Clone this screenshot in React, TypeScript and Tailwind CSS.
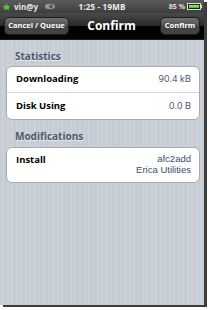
import React from "react";

const font = { fontFamily: '"Open Sans", "DejaVu Sans", sans-serif' };

export default function App() {
  return (
    <div className="w-[210px] h-[310px] bg-white relative overflow-hidden" style={font}>
      <div className="w-[204px] h-[305px] flex flex-col shadow-[3px_2px_0_#3c3c3c] bg-[repeating-linear-gradient(90deg,#c5ccd4_0px,#c5ccd4_2.5px,#ccd2d9_2.5px,#ccd2d9_4.5px)]">
        {/* Status bar */}
        <div className="h-[13px] flex items-center px-[2px] bg-[linear-gradient(#5b5b5b,#3d3d3d)] text-white text-[8px] font-bold leading-none">
          <div className="flex items-center w-[70px] gap-[3px]">
            <svg width="9" height="8" viewBox="0 0 9 8">
              <path d="M4.5 0.5 L6 3 L8.5 3 L6.5 5 L7 7.5 L4.5 6 L2 7.5 L2.5 5 L0.5 3 L3 3 Z" fill="#5fbf3a" />
            </svg>
            <span className="text-[#e6e6e6]">vin@y</span>
            <svg width="12" height="7" viewBox="0 0 12 7" className="ml-[3px]">
              <ellipse cx="6" cy="3.5" rx="5" ry="2.8" fill="#9a9a9a" />
              <circle cx="7" cy="3.5" r="2" fill="#5a5a5a" />
            </svg>
          </div>
          <div className="flex-1 text-center text-[#eeeeee] tracking-[0.2px]">1:25 - 19MB</div>
          <div className="w-[70px] flex items-center justify-end gap-[2px]">
            <span className="text-[7px] text-[#e0e0e0]">85 %</span>
            <div className="flex items-center">
              <div className="w-[14px] h-[7px] border border-[#dddddd] p-[1px] bg-[#222]">
                <div className="w-full h-full bg-[linear-gradient(#9cf07a,#3cc21a)]" />
              </div>
              <div className="w-[1px] h-[3px] bg-[#dddddd]" />
            </div>
          </div>
        </div>
        {/* Nav bar */}
        <div className="h-[27px] flex items-center justify-between px-[4px] bg-[linear-gradient(#4a4a4a_0%,#2a2a2a_48%,#000_52%,#050505_100%)] border-b border-[#1a1a1a]">
          <div className="h-[18px] w-[65px] rounded-[5px] border border-[#1e1e1e] bg-[linear-gradient(#707070_0%,#505050_50%,#404040_52%,#444444_100%)] flex items-center justify-center text-white text-[7.5px] font-bold">
            Cancel / Queue
          </div>
          <div className="text-white text-[12px] font-bold -ml-[6px]">Confirm</div>
          <div className="h-[18px] w-[40px] rounded-[5px] border border-[#1e1e1e] bg-[linear-gradient(#707070_0%,#505050_50%,#404040_52%,#444444_100%)] flex items-center justify-center text-white text-[7.5px] font-bold">
            Confirm
          </div>
        </div>
        {/* Content */}
        <div className="flex flex-col px-[6px] pr-[4px]">
          <div className="h-[26px] pt-[9px] pl-[9px] text-[10px] font-bold text-[#4c566c] [text-shadow:0_1px_0_#ffffffaa] leading-[14px]">
            Statistics
          </div>
          <div className="bg-white border border-[#a8abae] rounded-[6px] flex flex-col">
            <div className="h-[26px] flex items-center justify-between pl-[9px] pr-[8px] border-b border-[#d4d4d4]">
              <span className="text-[9.5px] font-bold text-black">Downloading</span>
              <span className="text-[9.5px] text-[#3e4c6e]">90.4 kB</span>
            </div>
            <div className="h-[26px] flex items-center justify-between pl-[9px] pr-[8px]">
              <span className="text-[9.5px] font-bold text-black">Disk Using</span>
              <span className="text-[9.5px] text-[#3e4c6e]">0.0 B</span>
            </div>
          </div>
          <div className="h-[27px] pt-[9px] pl-[9px] text-[10px] font-bold text-[#4c566c] [text-shadow:0_1px_0_#ffffffaa] leading-[14px]">
            Modifications
          </div>
          <div className="bg-white border border-[#a8abae] rounded-[6px] h-[36px] flex justify-between pl-[9px] pr-[8px] pt-[5px]">
            <span className="text-[9.5px] font-bold text-black leading-[13px]">Install</span>
            <div className="flex flex-col items-end text-[9.5px] text-[#3e4c6e] leading-[11px] font-['Liberation_Sans',sans-serif]">
              <span>afc2add</span>
              <span>Erica Utilities</span>
            </div>
          </div>
        </div>
      </div>
    </div>
  );
}
